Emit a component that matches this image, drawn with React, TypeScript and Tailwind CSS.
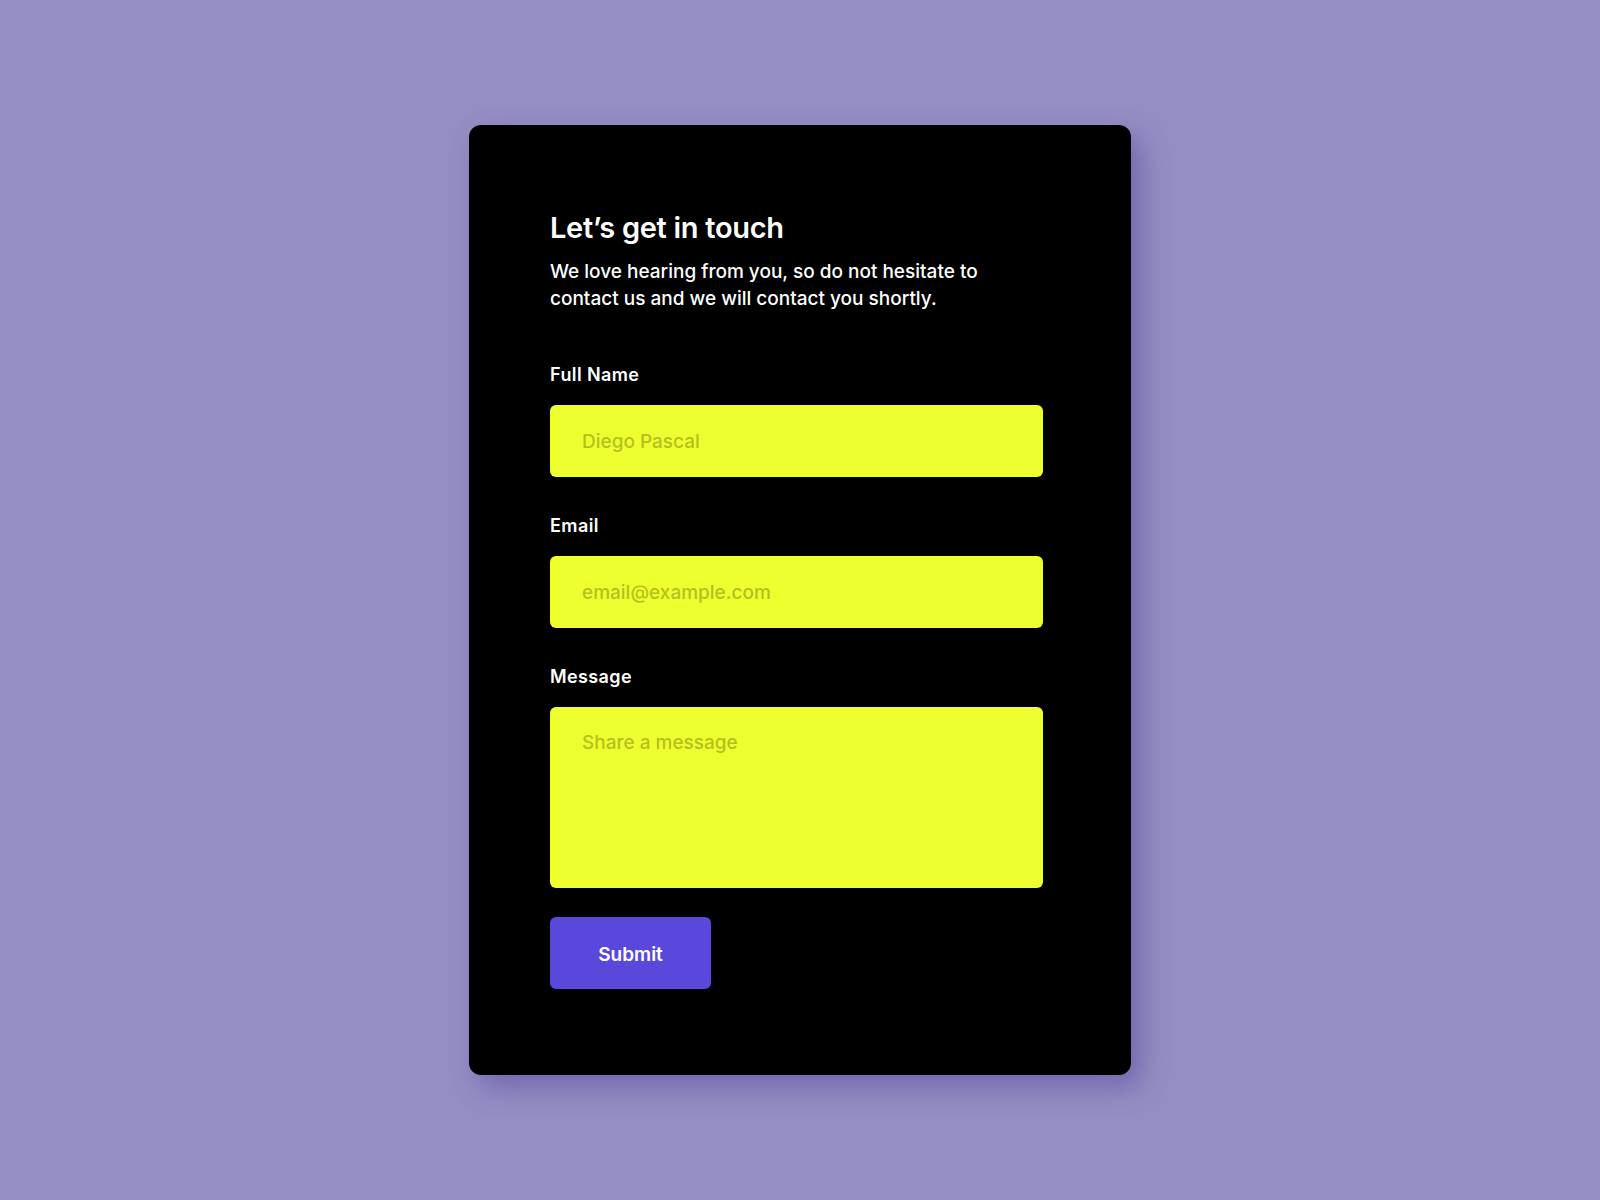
export default function App() {
  return (
    <div className="flex min-h-screen w-full items-center justify-center bg-[#958ec4] font-['Inter',sans-serif]">
      <form
        onSubmit={(e) => e.preventDefault()}
        className="h-[950px] w-[662px] rounded-xl bg-black pl-[81px] pt-[85px] shadow-[10px_12px_28px_rgba(70,55,150,0.45)]"
      >
        <h1 className="text-[29px] font-semibold leading-[36px] tracking-[-0.3px] text-white">Let’s get in touch</h1>
        <p className="mt-[12px] max-w-[450px] text-[19px] font-medium leading-[27px] text-white">
          We love hearing from you, so do not hesitate to contact us and we will contact you shortly.
        </p>

        <label className="mt-[51px] block text-[18px] font-semibold leading-[24px] tracking-[0.4px] text-white">Full Name</label>
        <input
          placeholder="Diego Pascal"
          className="mt-[18px] block h-[72px] w-[493px] rounded-md bg-[#eeff30] px-8 text-[19px] font-medium text-black outline-none placeholder:text-[#b3c11f]"
        />

        <label className="mt-[37px] block text-[18px] font-semibold leading-[24px] tracking-[0.4px] text-white">Email</label>
        <input
          placeholder="email@example.com"
          className="mt-[18px] block h-[72px] w-[493px] rounded-md bg-[#eeff30] px-8 text-[19px] font-medium text-black outline-none placeholder:text-[#b3c11f]"
        />

        <label className="mt-[37px] block text-[18px] font-semibold leading-[24px] tracking-[0.4px] text-white">Message</label>
        <textarea
          placeholder="Share a message"
          className="mt-[18px] block h-[181px] w-[493px] resize-none rounded-md bg-[#eeff30] px-8 pt-6 text-[19px] font-medium leading-[24px] text-black outline-none placeholder:text-[#b3c11f]"
        />

        <button
          type="submit"
          className="mt-[29px] h-[72px] w-[161px] rounded-md bg-[#5a47db] pt-[5px] text-[19px] font-semibold text-white"
        >
          Submit
        </button>
      </form>
    </div>
  )
}
